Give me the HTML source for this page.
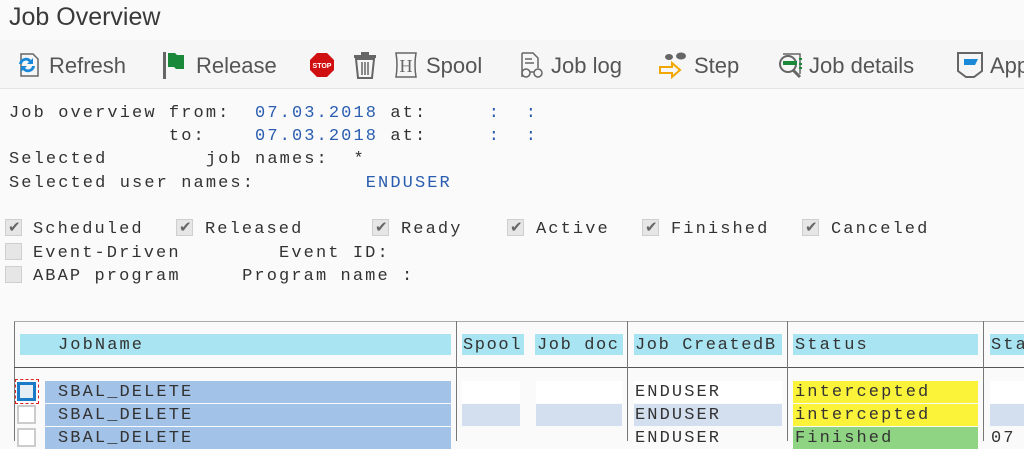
<!DOCTYPE html>
<html><head><style>
*{margin:0;padding:0;box-sizing:border-box}
body{width:1024px;height:436px;overflow:hidden;background:#fafafa;font-family:"Liberation Sans",sans-serif;position:relative}
.a{position:absolute;white-space:pre}
.t{font-size:25px;color:#3a3a3a;left:9px;top:3px}
.tb{position:absolute;left:0;top:40px;width:1024px;height:49px;background:#f6f6f6;border-bottom:1px solid #e4e4e4}
.tbt{font-size:22px;color:#555;top:53px}
.m{font-family:"Liberation Mono",monospace;font-size:17px;letter-spacing:2.1px;color:#333;margin-top:3px}
.b{color:#2a5db0}
.cb{position:absolute;width:17px;height:17px;background:#e6e6e6;border:1px solid #cfcfcf}
.ck{font-size:15px;color:#666;position:absolute;left:2px;top:-2px;font-family:"DejaVu Sans"}
.cell{position:absolute;height:21px}
.cy{background:#a8e4f2}
</style></head><body>
<div class="a t">Job Overview</div>
<div class="tb"></div>
<svg class="a" style="left:16px;top:52px" width="26" height="26" viewBox="0 0 26 26"><path d="M5 2h12l5 5v17H5z" fill="none" stroke="#666" stroke-width="1.5"/><path d="M3 12a7 7 0 0 1 12-4l2-2v6h-6l2-2a4 4 0 0 0-7 2z" fill="#1a8ad8"/><path d="M19 14a7 7 0 0 1-12 4l-2 2v-6h6l-2 2a4 4 0 0 0 7-2z" fill="#1a8ad8"/></svg>
<div class="a tbt" style="left:49px">Refresh</div>
<svg class="a" style="left:162px;top:51px" width="26" height="28"><rect x="1" y="1" width="3" height="27" fill="#666"/><path d="M6 2h7l2 2h7v14h-8l-2-2H6z" fill="#1a8a3a"/></svg>
<div class="a tbt" style="left:196px">Release</div>
<svg class="a" style="left:310px;top:53px" width="24" height="24"><polygon points="7,0 17,0 24,7 24,17 17,24 7,24 0,17 0,7" fill="#d01010"/><text x="12" y="15" font-size="7" font-weight="bold" fill="#fff" text-anchor="middle" font-family="Liberation Sans">STOP</text></svg>
<svg class="a" style="left:352px;top:51px" width="26" height="28"><rect x="2" y="4" width="22" height="3" fill="#666"/><rect x="9" y="1" width="8" height="3" fill="#666"/><path d="M4 8h18l-2 19H6z" fill="none" stroke="#666" stroke-width="2"/><path d="M10 11v13M13 11v13M16 11v13" stroke="#666" stroke-width="1.5"/></svg>
<svg class="a" style="left:393px;top:51px" width="26" height="28"><path d="M3 2h20q-2 12 0 24H3q2-12 0-24z" fill="none" stroke="#666" stroke-width="1.5"/><text x="13" y="21" font-size="18" fill="#666" text-anchor="middle" font-family="Liberation Serif">H</text></svg>
<div class="a tbt" style="left:426px">Spool</div>
<svg class="a" style="left:519px;top:51px" width="26" height="28"><path d="M3 2h11l5 5v10M3 2v24" fill="none" stroke="#666" stroke-width="1.5"/><path d="M6 8h7M6 12h9" stroke="#666" stroke-width="1.5"/><circle cx="7" cy="22" r="4" fill="none" stroke="#666" stroke-width="1.5"/><circle cx="19" cy="22" r="4" fill="none" stroke="#666" stroke-width="1.5"/><path d="M11 21h4" stroke="#666" stroke-width="1.5"/></svg>
<div class="a tbt" style="left:551px">Job log</div>
<svg class="a" style="left:659px;top:51px" width="28" height="28"><ellipse cx="10" cy="6" rx="4" ry="3" fill="#666"/><ellipse cx="22" cy="5" rx="5" ry="3.5" fill="#666"/><path d="M1 16h12v-4l8 7-8 7v-4H1z" fill="none" stroke="#f0a800" stroke-width="2"/></svg>
<div class="a tbt" style="left:694px">Step</div>
<svg class="a" style="left:778px;top:51px" width="28" height="28"><path d="M5 3h17v20" fill="none" stroke="#666" stroke-width="1.5"/><circle cx="10" cy="13" r="8" fill="none" stroke="#666" stroke-width="2"/><path d="M15 19l7 7" stroke="#666" stroke-width="3"/><rect x="5" y="10" width="14" height="4" fill="#1a8a3a"/><path d="M21 8h3M21 13h3M21 17h3" stroke="#1a8a3a" stroke-width="2"/></svg>
<div class="a tbt" style="left:809px">Job details</div>
<svg class="a" style="left:956px;top:51px" width="28" height="28"><path d="M2 2h24v18l-8 6h-8l-8-6z" fill="none" stroke="#666" stroke-width="2"/><path d="M8 8h14l-3 6H8z" fill="#1a8ad8"/></svg>
<div class="a tbt" style="left:990px">App</div>

<div class="a m" style="left:9px;top:101px">Job overview from:  <span class="b">07.03.2018</span> at:     <span class="b">:  :</span></div>
<div class="a m" style="left:9px;top:124px">             to:    <span class="b">07.03.2018</span> at:     <span class="b">:  :</span></div>
<div class="a m" style="left:9px;top:147px">Selected        job names:  *</div>
<div class="a m" style="left:9px;top:171px">Selected user names:         <span class="b">ENDUSER</span></div>

<div class="cb" style="left:5px;top:219px"><span class="ck">✔</span></div>
<div class="a m" style="left:33px;top:217px">Scheduled</div>
<div class="cb" style="left:176px;top:219px"><span class="ck">✔</span></div>
<div class="a m" style="left:205px;top:217px">Released</div>
<div class="cb" style="left:372px;top:219px"><span class="ck">✔</span></div>
<div class="a m" style="left:401px;top:217px">Ready</div>
<div class="cb" style="left:507px;top:219px"><span class="ck">✔</span></div>
<div class="a m" style="left:536px;top:217px">Active</div>
<div class="cb" style="left:642px;top:219px"><span class="ck">✔</span></div>
<div class="a m" style="left:671px;top:217px">Finished</div>
<div class="cb" style="left:802px;top:219px"><span class="ck">✔</span></div>
<div class="a m" style="left:831px;top:217px">Canceled</div>
<div class="cb" style="left:5px;top:243px"></div>
<div class="a m" style="left:33px;top:241px">Event-Driven        Event ID:</div>
<div class="cb" style="left:5px;top:266px"></div>
<div class="a m" style="left:33px;top:264px">ABAP program     Program name :</div>

<div class="a" style="left:14px;top:321px;width:1020px;height:120px;border-left:1px solid #777;border-top:1px solid #aaa"></div>
<div class="a" style="left:14px;top:367px;width:1010px;border-top:1px solid #555"></div>
<div class="a" style="left:456px;top:321px;height:120px;border-left:1px solid #777"></div>
<div class="a" style="left:627px;top:321px;height:120px;border-left:1px solid #777"></div>
<div class="a" style="left:787px;top:321px;height:120px;border-left:1px solid #777"></div>
<div class="a" style="left:983px;top:321px;height:120px;border-left:1px solid #777"></div>

<div class="cell cy" style="left:20px;top:334px;width:431px"></div>
<div class="cell cy" style="left:462px;top:334px;width:62px"></div>
<div class="cell cy" style="left:535px;top:334px;width:88px"></div>
<div class="cell cy" style="left:634px;top:334px;width:148px"></div>
<div class="cell cy" style="left:793px;top:334px;width:185px"></div>
<div class="cell cy" style="left:990px;top:334px;width:40px"></div>
<div class="a m" style="left:58px;top:333px">JobName</div>
<div class="a m" style="left:463px;top:333px;letter-spacing:1.6px">Spool</div>
<div class="a m" style="left:537px;top:333px;letter-spacing:1.6px">Job doc</div>
<div class="a m" style="left:635px;top:333px;letter-spacing:1.6px">Job CreatedB</div>
<div class="a m" style="left:795px;top:333px">Status</div>
<div class="a m" style="left:991px;top:333px">Sta</div>

<div class="cell" style="left:45px;top:381px;width:406px;height:22px;background:#a3c2e8"></div>
<div class="cell" style="left:45px;top:404px;width:406px;height:22px;background:#a3c2e8"></div>
<div class="cell" style="left:45px;top:427px;width:406px;height:22px;background:#a3c2e8"></div>
<div class="cell" style="left:462px;top:381px;width:58px;height:22px;background:#fff"></div>
<div class="cell" style="left:462px;top:404px;width:58px;height:22px;background:#d3deef"></div>
<div class="cell" style="left:536px;top:381px;width:86px;height:22px;background:#fff"></div>
<div class="cell" style="left:536px;top:404px;width:86px;height:22px;background:#d3deef"></div>
<div class="cell" style="left:634px;top:381px;width:148px;height:22px;background:#fff"></div>
<div class="cell" style="left:634px;top:404px;width:148px;height:22px;background:#d3deef"></div>
<div class="cell" style="left:793px;top:381px;width:185px;height:22px;background:#fbf33a"></div>
<div class="cell" style="left:793px;top:404px;width:185px;height:22px;background:#fbf33a"></div>
<div class="cell" style="left:793px;top:427px;width:185px;height:22px;background:#8fd483"></div>
<div class="cell" style="left:990px;top:381px;width:40px;height:22px;background:#fff"></div>
<div class="cell" style="left:990px;top:404px;width:40px;height:22px;background:#d3deef"></div>

<div class="a" style="left:15px;top:379px;width:24px;height:25px;border:1.5px dashed #e02020"></div>
<div class="a" style="left:17px;top:382px;width:19px;height:19px;border:3px solid #1a7ac8;background:#e6eef5"></div>
<div class="a" style="left:17px;top:405px;width:19px;height:19px;border:2px solid #ccc;background:#fff"></div>
<div class="a" style="left:17px;top:428px;width:19px;height:19px;border:2px solid #ccc;background:#fff"></div>

<div class="a m" style="left:58px;top:380px">SBAL_DELETE</div>
<div class="a m" style="left:58px;top:403px">SBAL_DELETE</div>
<div class="a m" style="left:58px;top:426px">SBAL_DELETE</div>
<div class="a m" style="left:635px;top:380px">ENDUSER</div>
<div class="a m" style="left:635px;top:403px">ENDUSER</div>
<div class="a m" style="left:635px;top:426px">ENDUSER</div>
<div class="a m" style="left:795px;top:380px">intercepted</div>
<div class="a m" style="left:795px;top:403px">intercepted</div>
<div class="a m" style="left:795px;top:426px">Finished</div>
<div class="a m" style="left:991px;top:426px">07</div>
</body></html>
